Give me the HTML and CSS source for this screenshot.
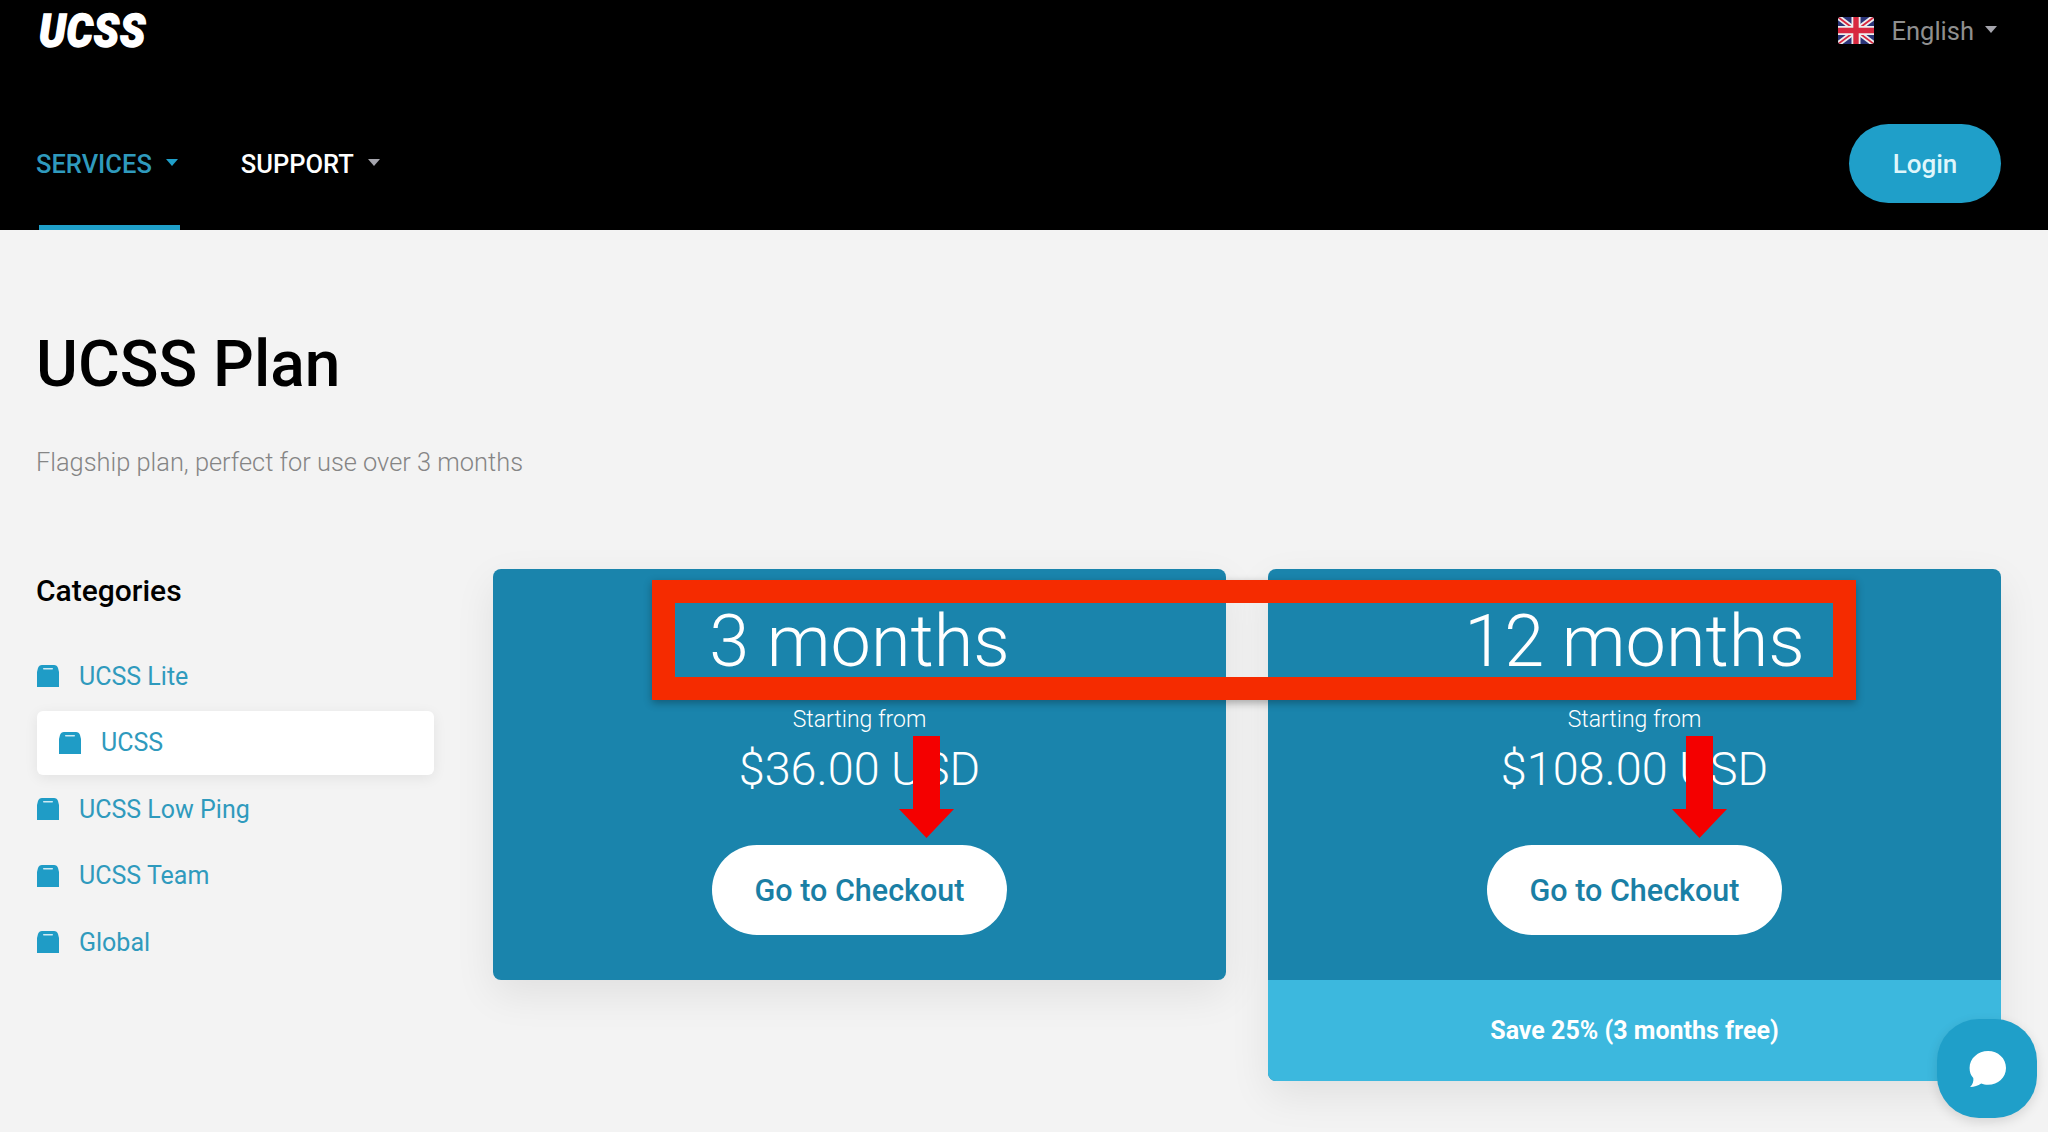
FILE: index.html
```html
<!DOCTYPE html>
<html lang="en">
    <head>
        <meta charset="UTF-8">
        <meta name="viewport" content="width=device-width, initial-scale=1.0">
        <title>UCSS Plan</title>
        <link rel="stylesheet" href="styles.css">
    </head>
<body>
    <header class="site-header">
        <div class="top-row">
            <a class="logo">UCSS</a>
            <div class="language">
                <svg class="flag" viewBox="0 0 60 45" width="36" height="27">
                    <defs><clipPath id="flag-clip"><rect width="60" height="45" rx="5"/></clipPath></defs>
                    <g clip-path="url(#flag-clip)">
                        <rect width="60" height="45" fill="#2a3478"/>
                        <path d="M0 0L60 45M60 0L0 45" stroke="#eee" stroke-width="9"/>
                        <path d="M0 0L60 45M60 0L0 45" stroke="#d8283f" stroke-width="3"/>
                        <path d="M30 0V45M0 22.500H60" stroke="#eee" stroke-width="15"/>
                        <path d="M30 0V45M0 22.500H60" stroke="#d8283f" stroke-width="9"/>
                    </g>
                </svg>
                <span>English</span>
                <i class="caret caret-grey"></i>
            </div>
        </div>
        <nav class="nav-row">
            <a class="nav-link active">SERVICES <i class="caret caret-blue"></i></a>
            <a class="nav-link">SUPPORT <i class="caret caret-grey"></i></a>
            <a class="login-button">Login</a>
        </nav>
    </header>

    <main class="content">
        <h1>UCSS Plan</h1>
        <p class="subtitle">Flagship plan, perfect for use over 3 months</p>

        <div class="plan-layout">
            <aside class="sidebar">
                <h2>Categories</h2>
                <ul class="category-list">
                    <li><svg class="box-icon" viewBox="0 0 22 22"><path d="M5 0H17Q20 0 21 3L22 7V22H0V7L1 3Q2 0 5 0Z" fill="#1f9cc6"/><rect x="6" y="3" width="10" height="1.5" rx=".7" fill="#cfeaf3"/></svg>UCSS Lite</li>
                    <li class="selected"><svg class="box-icon" viewBox="0 0 22 22"><path d="M5 0H17Q20 0 21 3L22 7V22H0V7L1 3Q2 0 5 0Z" fill="#1f9cc6"/><rect x="6" y="3" width="10" height="1.5" rx=".7" fill="#cfeaf3"/></svg>UCSS</li>
                    <li><svg class="box-icon" viewBox="0 0 22 22"><path d="M5 0H17Q20 0 21 3L22 7V22H0V7L1 3Q2 0 5 0Z" fill="#1f9cc6"/><rect x="6" y="3" width="10" height="1.5" rx=".7" fill="#cfeaf3"/></svg>UCSS Low Ping</li>
                    <li><svg class="box-icon" viewBox="0 0 22 22"><path d="M5 0H17Q20 0 21 3L22 7V22H0V7L1 3Q2 0 5 0Z" fill="#1f9cc6"/><rect x="6" y="3" width="10" height="1.5" rx=".7" fill="#cfeaf3"/></svg>UCSS Team</li>
                    <li><svg class="box-icon" viewBox="0 0 22 22"><path d="M5 0H17Q20 0 21 3L22 7V22H0V7L1 3Q2 0 5 0Z" fill="#1f9cc6"/><rect x="6" y="3" width="10" height="1.5" rx=".7" fill="#cfeaf3"/></svg>Global</li>
                </ul>
            </aside>

            <section class="plans">
                <div class="plan-card">
                    <div class="plan-body">
                        <div class="plan-term">3 months</div>
                        <div class="plan-from">Starting from</div>
                        <div class="plan-price">$36.00 USD</div>
                        <a class="checkout-button">Go to Checkout</a>
                    </div>
                </div>
                <div class="plan-card">
                    <div class="plan-body">
                        <div class="plan-term">12 months</div>
                        <div class="plan-from">Starting from</div>
                        <div class="plan-price">$108.00 USD</div>
                        <a class="checkout-button">Go to Checkout</a>
                    </div>
                    <div class="plan-save">Save 25% (3 months free)</div>
                </div>
            </section>
        </div>
    </main>

    <!-- annotations drawn over the screenshot -->
    <div class="mark-box"></div>
    <svg class="mark-arrow arrow-one" viewBox="0 0 55 102"><path d="M14 0H41V73H55L27.5 102L0 73H14Z" fill="#f40000"/></svg>
    <svg class="mark-arrow arrow-two" viewBox="0 0 55 102"><path d="M14 0H41V73H55L27.5 102L0 73H14Z" fill="#f40000"/></svg>

    <a class="chat-button">
        <svg viewBox="0 0 36 36" width="38" height="38"><path d="M19 1C28.5 1 36 8 36 17S28.5 33 19 33C16.5 33 14.5 32.600 12.500 31.800C9.500 34 6 35 2 35C4.500 32.500 5.500 29.500 5 26.500C2.500 24 1.500 20.500 1.500 17C1.500 8 9.500 1 19 1Z" fill="#fff"/></svg>
    </a>
</body>
</html>
```

FILE: styles.css
```css
:root {
    --blue: #1f9fc9;
    --card-blue: #1a84ac;
    --save-blue: #3cb8de;
    --link-blue: #2f9abd;
}

html, body {
    height: 1132px;
    overflow: hidden;
}

body {
    position: relative;
    margin: 0;
    font-family: Roboto, Arial, sans-serif;
    background-color: #f3f3f3;
    color: #000;
}

.site-header {
    height: 230px;
    background-color: #000;
    box-sizing: border-box;
    padding: 0 47px 0 36px;
}

.top-row {
    display: flex;
    justify-content: space-between;
    align-items: center;
    height: 61px;
}

.logo {
    margin-left: 3px;
    font-size: 46px;
    font-weight: 900;
    font-style: italic;
    letter-spacing: 1px;
    color: #fff;
    -webkit-text-stroke: 1.5px #fff;
    transform: scaleX(0.9);
    transform-origin: left center;
}

.language {
    display: flex;
    align-items: center;
    font-size: 25.5px;
    color: #8f8f8f;
    margin-right: 4px;
}

.flag {
    margin-right: 17px;
}

.caret {
    display: inline-block;
    width: 0;
    height: 0;
    border-left: 6px solid transparent;
    border-right: 6px solid transparent;
    border-top: 7px solid;
    vertical-align: middle;
}

.caret-grey {
    color: #a5a5ad;
}

.caret-blue {
    color: var(--blue);
}

.language .caret {
    margin-left: 11px;
    margin-bottom: 2px;
}

.nav-row {
    display: flex;
    align-items: center;
    height: 169px;
    box-sizing: border-box;
    padding-top: 36px;
}

.nav-link {
    position: relative;
    display: flex;
    align-items: center;
    height: 133px;
    font-size: 25.5px;
    font-weight: 500;
    color: #fff;
    margin-right: 63px;
}

.nav-link .caret {
    margin-left: 14px;
    margin-bottom: 2px;
}

.nav-link.active {
    color: var(--link-blue);
}

.nav-link.active::after {
    content: "";
    position: absolute;
    left: 3px;
    right: -2px;
    bottom: 0;
    height: 5px;
    background-color: var(--blue);
}

.login-button {
    display: flex;
    align-items: center;
    justify-content: center;
    margin-left: auto;
    width: 152px;
    height: 79px;
    border-radius: 40px;
    background-color: var(--blue);
    color: #dff6fb;
    font-size: 26px;
    font-weight: 500;
}

.content {
    padding: 0 47px 0 36px;
}

h1 {
    margin: 0;
    padding-top: 97px;
    font-size: 64px;
    line-height: 75px;
    font-weight: 500;
}

.subtitle {
    margin: 45px 0 0;
    font-size: 25.4px;
    line-height: 30px;
    font-weight: 300;
    color: #858585;
}

.plan-layout {
    display: grid;
    grid-template-columns: 398px 1fr;
    gap: 59px;
    margin-top: 92px;
    align-items: start;
}

.sidebar h2 {
    margin: 0;
    padding-top: 2px;
    font-size: 30px;
    line-height: 40px;
    font-weight: 500;
}

.category-list {
    list-style: none;
    margin: 33px 0 0;
    padding: 0;
}

.category-list li {
    display: flex;
    align-items: center;
    height: 64px;
    margin-bottom: 2.6px;
    font-size: 25px;
    color: var(--link-blue);
}

.category-list li.selected {
    margin-left: 1px;
    padding-left: 21px;
    background-color: #fff;
    border-radius: 6px;
    box-shadow: 0 3px 14px rgba(0,0,0,0.07);
}

.box-icon {
    width: 22px;
    height: 22px;
    margin: 0 20px 0 1px;
    flex-shrink: 0;
}

.plans {
    display: grid;
    grid-template-columns: 1fr 1fr;
    gap: 42px;
    align-items: start;
}

.plan-card {
    background-color: var(--card-blue);
    border-radius: 8px;
    overflow: hidden;
    box-shadow: 0 14px 40px rgba(0,0,0,0.08);
    color: #fff;
    text-align: center;
}

.plan-body {
    height: 411px;
    box-sizing: border-box;
    padding-top: 31px;
}

.plan-term {
    font-size: 72px;
    line-height: 84px;
    font-weight: 300;
}

.plan-from {
    margin-top: 22px;
    font-size: 23px;
    line-height: 28px;
    font-weight: 300;
}

.plan-price {
    margin-top: 9px;
    font-size: 46.800px;
    line-height: 53px;
    font-weight: 300;
}

.checkout-button {
    display: flex;
    align-items: center;
    justify-content: center;
    width: 295px;
    height: 90px;
    margin: 49px auto 0;
    border-radius: 45px;
    background-color: #fff;
    color: #1a7fa5;
    font-size: 30.500px;
    font-weight: 500;
}

.plan-save {
    height: 101px;
    line-height: 101px;
    background-color: var(--save-blue);
    font-size: 25px;
    font-weight: 700;
}

.mark-box {
    position: absolute;
    left: 652px;
    top: 580px;
    width: 1204px;
    height: 120px;
    box-sizing: border-box;
    border: 23px solid #f52b00;
    box-shadow: 0 3px 8px rgba(0,0,0,0.3);
}

.mark-arrow {
    position: absolute;
    top: 736px;
    width: 55px;
    height: 102px;
}

.arrow-one {
    left: 899px;
}

.arrow-two {
    left: 1672px;
}

.chat-button {
    position: absolute;
    left: 1937px;
    top: 1019px;
    width: 100px;
    height: 99px;
    display: flex;
    align-items: center;
    justify-content: center;
    border-radius: 42px;
    background-color: var(--blue);
    box-shadow: 0 4px 12px rgba(0,0,0,0.12);
}
```
